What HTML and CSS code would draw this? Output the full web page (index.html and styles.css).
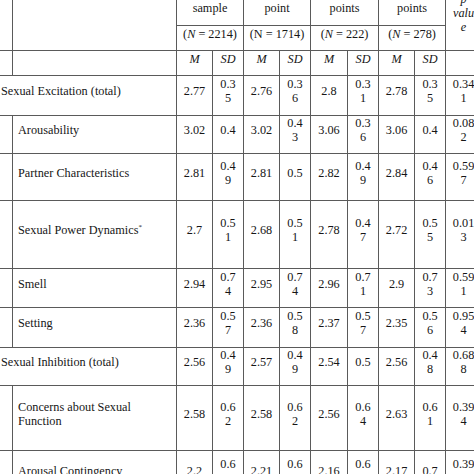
FILE: index.html
```html
<!DOCTYPE html>
<html>
<head>
<meta charset="utf-8">
<link rel="stylesheet" href="styles.css">
</head>
<body>
<table class="stats">
  <colgroup>
    <col class="c-indent">
    <col class="c-label">
    <col class="c-m">
    <col class="c-sd">
    <col class="c-m">
    <col class="c-sd">
    <col class="c-m3">
    <col class="c-sd">
    <col class="c-m">
    <col class="c-sd">
    <col class="c-p">
  </colgroup>
  <thead>
    <tr class="row-h1">
      <th rowspan="2"></th>
      <th rowspan="2"></th>
      <th colspan="2" class="grp">sample</th>
      <th colspan="2" class="grp">point</th>
      <th colspan="2" class="grp">points</th>
      <th colspan="2" class="grp">points</th>
      <th rowspan="2" class="pval"><i>p</i> <i>value</i></th>
    </tr>
    <tr class="row-h2">
      <th colspan="2">(<i>N</i> = 2214)</th>
      <th colspan="2">(N = 1714)</th>
      <th colspan="2">(<i>N</i> = 222)</th>
      <th colspan="2">(<i>N</i> = 278)</th>
    </tr>
    <tr class="row-h3">
      <th></th>
      <th></th>
      <th><i>M</i></th><th><i>SD</i></th>
      <th><i>M</i></th><th><i>SD</i></th>
      <th><i>M</i></th><th><i>SD</i></th>
      <th><i>M</i></th><th><i>SD</i></th>
      <th></th>
    </tr>
  </thead>
  <tbody>
    <tr class="row-40">
      <td colspan="2" class="lbl">Sexual Excitation (total)</td>
      <td>2.77</td><td>0.35</td><td>2.76</td><td>0.36</td><td>2.8</td><td>0.31</td><td>2.78</td><td>0.35</td><td>0.341</td>
    </tr>
    <tr class="row-38">
      <td></td><td class="lbl">Arousability</td>
      <td>3.02</td><td>0.4</td><td>3.02</td><td>0.43</td><td>3.06</td><td>0.36</td><td>3.06</td><td>0.4</td><td>0.082</td>
    </tr>
    <tr class="row-47">
      <td></td><td class="lbl">Partner Characteristics</td>
      <td>2.81</td><td>0.49</td><td>2.81</td><td>0.5</td><td>2.82</td><td>0.49</td><td>2.84</td><td>0.46</td><td>0.597</td>
    </tr>
    <tr class="row-68">
      <td></td><td class="lbl">Sexual Power Dynamics<sup class="star">*</sup></td>
      <td>2.7</td><td>0.51</td><td>2.68</td><td>0.51</td><td>2.78</td><td>0.47</td><td>2.72</td><td>0.55</td><td>0.013</td>
    </tr>
    <tr class="row-39">
      <td></td><td class="lbl">Smell</td>
      <td>2.94</td><td>0.74</td><td>2.95</td><td>0.74</td><td>2.96</td><td>0.71</td><td>2.9</td><td>0.73</td><td>0.591</td>
    </tr>
    <tr class="row-40">
      <td></td><td class="lbl">Setting</td>
      <td>2.36</td><td>0.57</td><td>2.36</td><td>0.58</td><td>2.37</td><td>0.57</td><td>2.35</td><td>0.56</td><td>0.954</td>
    </tr>
    <tr class="row-38">
      <td colspan="2" class="lbl">Sexual Inhibition (total)</td>
      <td>2.56</td><td>0.49</td><td>2.57</td><td>0.49</td><td>2.54</td><td>0.5</td><td>2.56</td><td>0.48</td><td>0.688</td>
    </tr>
    <tr class="row-65">
      <td></td><td class="lbl">Concerns about Sexual Function</td>
      <td>2.58</td><td>0.62</td><td>2.58</td><td>0.62</td><td>2.56</td><td>0.64</td><td>2.63</td><td>0.61</td><td>0.394</td>
    </tr>
    <tr class="row-50">
      <td></td><td class="lbl">Arousal Contingency</td>
      <td>2.2</td><td>0.65</td><td>2.21</td><td>0.66</td><td>2.16</td><td>0.63</td><td>2.17</td><td>0.7</td><td>0.393</td>
    </tr>
  </tbody>
</table>
</body>
</html>
```
FILE: styles.css
```css
html, body {
  margin: 0;
  padding: 0;
  background: #ffffff;
  overflow: hidden;
}

body {
  font-family: "Liberation Serif", "Times New Roman", serif;
  font-size: 12.25px;
  color: #161616;
}

.stats {
  border-collapse: collapse;
  table-layout: fixed;
  width: 486px;
  margin: -20px 0 0 -5px;
  line-height: 14px;
}

.c-indent { width: 17px; }
.c-label { width: 164px; }
.c-m { width: 36px; }
.c-m3 { width: 37px; }
.c-sd { width: 31px; }
.c-p { width: 36px; }

.stats th,
.stats td {
  border: 1px solid #5a5a5a;
  padding: 0 5px 9px;
  text-align: center;
  vertical-align: middle;
  font-weight: normal;
  overflow-wrap: anywhere;
}

.stats .grp {
  vertical-align: bottom;
  padding-bottom: 10px;
}

.stats .pval {
  padding-bottom: 5px;
}

.stats .lbl {
  text-align: left;
  padding-right: 8px;
  overflow-wrap: normal;
}

.star {
  font-size: 7px;
  line-height: 0;
  vertical-align: 5px;
}

.row-h1 { height: 45px; }
.row-h2 { height: 25px; }
.row-h3 { height: 25px; }
.row-38 { height: 38px; }
.row-39 { height: 39px; }
.row-40 { height: 40px; }
.row-47 { height: 47px; }
.row-50 { height: 50px; }
.row-65 { height: 65px; }
.row-68 { height: 68px; }
```
